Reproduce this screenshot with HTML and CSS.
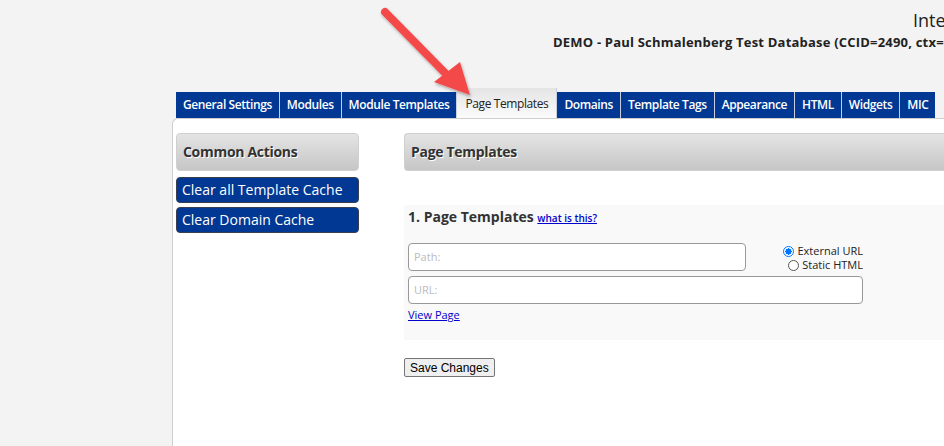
FILE: index.html
```html
<!DOCTYPE html>
<html>
<head>
<meta charset="utf-8">
<link rel="stylesheet" href="styles.css">
</head>
<body>
<div class="page">
  <div class="header">
    <div class="title">Internet Presence Manager</div>
    <div class="subtitle">DEMO - Paul Schmalenberg Test Database (CCID=2490, ctx=1)</div>
  </div>
  <div class="tabs">
    <div class="tab">General Settings</div>
    <div class="tab">Modules</div>
    <div class="tab">Module Templates</div>
    <div class="tab active">Page Templates</div>
    <div class="tab">Domains</div>
    <div class="tab">Template Tags</div>
    <div class="tab">Appearance</div>
    <div class="tab">HTML</div>
    <div class="tab">Widgets</div>
    <div class="tab last">MIC</div>
  </div>
  <div class="panel">
    <div class="sidebar">
      <div class="box-head">Common Actions</div>
      <div class="action">Clear all Template Cache</div>
      <div class="action">Clear Domain Cache</div>
    </div>
    <div class="main">
      <div class="box-head wide">Page Templates</div>
      <div class="section">
        <div class="sec-title">1. Page Templates <a href="#" class="help">what is this?</a></div>
        <div class="row">
          <div class="input path">Path:</div>
          <div class="radios">
            <label class="radio"><span class="dot checked"></span>External URL</label>
            <label class="radio"><span class="dot"></span>Static HTML</label>
          </div>
        </div>
        <div class="input url">URL:</div>
        <a href="#" class="view">View Page</a>
      </div>
      <button class="save">Save Changes</button>
    </div>
  </div>
</div>
<svg class="arrow" width="120" height="110" viewBox="0 0 120 110">
  <defs>
    <filter id="sh" x="-20%" y="-20%" width="140%" height="140%">
      <feDropShadow dx="1" dy="2" stdDeviation="1.5" flood-color="#000" flood-opacity="0.3"/>
    </filter>
  </defs>
  <g filter="url(#sh)">
    <line x1="15" y1="12" x2="82" y2="80" stroke="#f44a4a" stroke-width="8" stroke-linecap="round"/>
    <polygon points="64,82 90,62 100,95" fill="#f44a4a"/>
  </g>
</svg>
</body>
</html>
```
FILE: styles.css
```css
html, body {
  margin: 0;
  padding: 0;
  background: #f3f3f3;
  overflow: hidden;
  width: 944px;
  height: 446px;
}
body {
  font-family: "Open Sans", Lato, sans-serif;
  color: #222;
  position: relative;
}
.page {
  width: 1300px;
}
.header {
  height: 88px;
  box-sizing: border-box;
  padding-top: 8px;
  white-space: nowrap;
}
.title {
  margin-left: 913px;
  font-size: 18px;
  line-height: 24px;
  color: #222;
}
.subtitle {
  margin-left: 553px;
  font-size: 13px;
  font-weight: bold;
  letter-spacing: 0.2px;
  line-height: 20px;
  color: #222;
}
.tabs {
  display: flex;
  align-items: flex-end;
  margin-left: 176px;
  height: 30px;
}
.tab {
  height: 26px;
  line-height: 26px;
  padding: 0 7px;
  background: #013893;
  color: #fff;
  font-size: 12px;
  font-weight: 600;
  letter-spacing: -0.4px;
  border-right: 1px solid #c8d0e0;
  white-space: nowrap;
}
.tab.last {
  border-right: none;
}
.tab.active {
  height: 30px;
  line-height: 32px;
  padding: 0 8px;
  background: linear-gradient(#e4e4e4, #fbfbfb);
  color: #222;
  font-weight: normal;
}
.panel {
  margin-left: 172px;
  background: #fff;
  border-left: 1px solid #cfcfcf;
  border-top: 1px solid #cfcfcf;
  border-top-left-radius: 6px;
  height: 330px;
  display: flex;
  padding: 14px 0 0 3px;
}
.sidebar {
  width: 183px;
  display: flex;
  flex-direction: column;
  gap: 4px;
}
.box-head {
  box-sizing: border-box;
  height: 38px;
  line-height: 36px;
  padding-left: 6px;
  border: 1px solid #d0d0d0;
  border-radius: 4px;
  background: linear-gradient(#e4e4e4, #c6c6c6);
  font-size: 14px;
  font-weight: bold;
  letter-spacing: -0.3px;
  color: #333;
  text-shadow: 1px 1px 0 #fff;
  margin-bottom: 2px;
}
.box-head.wide {
  border-top-right-radius: 0;
  border-bottom-right-radius: 0;
  border-right: none;
}
.action {
  box-sizing: border-box;
  height: 26px;
  line-height: 24px;
  padding-left: 5px;
  background: #013893;
  border: 1px solid #3a3f4f;
  border-radius: 4px;
  color: #fff;
  font-size: 14px;
  white-space: nowrap;
}
.main {
  margin-left: 45px;
  flex: 1;
}
.section {
  margin-top: 34px;
  background: #f9f9f9;
  padding: 1px 0 14px 4px;
  height: 120px;
}
.sec-title {
  font-size: 14px;
  font-weight: bold;
  color: #333;
  line-height: 22px;
}
.help {
  font-size: 10px;
  color: #00c;
  font-weight: 600;
}
.row {
  display: flex;
  align-items: flex-start;
  width: 455px;
  justify-content: space-between;
  margin-top: 14px;
}
.input {
  box-sizing: border-box;
  height: 28px;
  line-height: 26px;
  border: 1px solid #999;
  border-radius: 4px;
  background: #fff;
  color: #bbb;
  font-size: 11px;
  padding-left: 5px;
}
.input.path {
  width: 338px;
}
.input.url {
  width: 455px;
  margin-top: 4px;
}
.radios {
  display: flex;
  flex-direction: column;
  align-items: flex-end;
  margin-top: 1px;
}
.radio {
  display: flex;
  align-items: center;
  font-size: 11px;
  line-height: 14px;
  color: #222;
}
.dot {
  box-sizing: border-box;
  width: 11px;
  height: 11px;
  border-radius: 50%;
  border: 1px solid #555;
  background: #fff;
  margin-right: 3px;
}
.dot.checked {
  border: 1px solid #0075ff;
  background: radial-gradient(circle, #0075ff 0 3px, #fff 3.2px);
}
.view {
  display: block;
  font-size: 11px;
  color: #00c;
  margin-top: 3px;
}
.save {
  margin-top: 18px;
  font-family: Arial, "Liberation Sans", sans-serif;
  font-size: 12px;
  height: 19px;
  padding: 0 5px;
  border: 1px solid #767676;
  border-radius: 2px;
  background: #efefef;
  color: #000;
}
.arrow {
  position: absolute;
  left: 370px;
  top: 0;
}
```
